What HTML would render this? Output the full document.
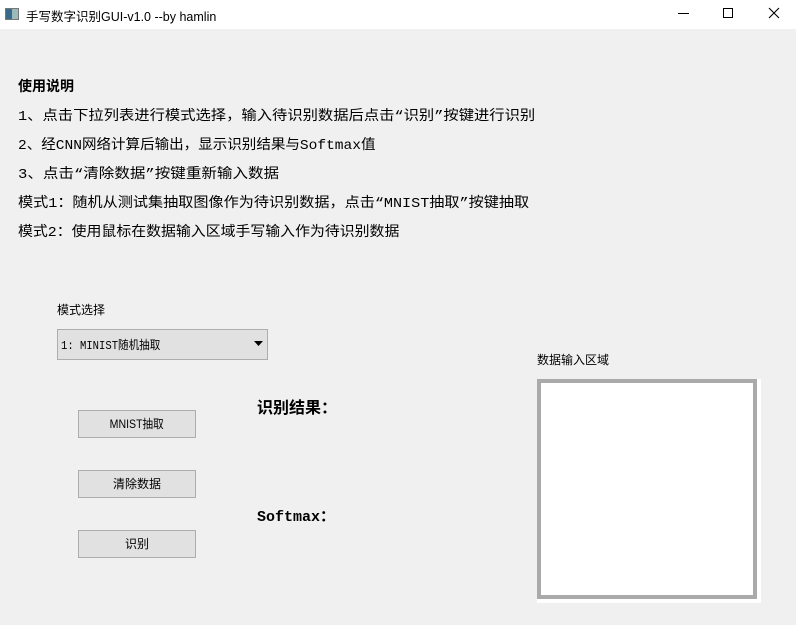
<!DOCTYPE html>
<html><head><meta charset="utf-8"><style>
*{margin:0;padding:0;box-sizing:border-box}
body{width:796px;height:625px;background:#f0f0f0;position:relative;overflow:hidden;font-family:"Liberation Sans","Noto Sans CJK SC",sans-serif;color:#000}
.a{position:absolute;white-space:nowrap}
.tb{position:absolute;left:0;top:0;width:796px;height:29px;background:#fff}
.ln{font-family:"Liberation Mono","Noto Sans CJK SC",monospace;font-size:14px;left:18px;transform-origin:0 0}
.btn{position:absolute;left:78px;width:118px;height:28px;background:#e1e1e1;border:1px solid #adadad;font-size:12px;text-align:center;line-height:26px}
.g{position:absolute;background:#aaa}
</style></head><body>
<div class="tb"></div>
<div class="a" style="left:5px;top:8px;width:14px;height:12px;border:1px solid #777;background:linear-gradient(90deg,#3a6a8a 50%,#9bb 50%)"></div>
<div class="a" style="left:26px;top:6px;font-size:12.5px">手写数字识别GUI-v1.0 --by hamlin</div>
<div class="a" style="left:678px;top:13px;width:11px;height:1px;background:#000"></div>
<div class="a" style="left:723px;top:8px;width:10px;height:10px;border:1px solid #000"></div>
<svg class="a" style="left:768px;top:7px" width="12" height="12"><path d="M1 1L11 11M11 1L1 11" stroke="#000" stroke-width="1.1"/></svg>

<div class="a ln" style="top:76px;font-weight:bold">使用说明</div>
<div class="a ln" style="top:105px;transform:scaleX(1.093)">1、点击下拉列表进行模式选择，输入待识别数据后点击“识别”按键进行识别</div>
<div class="a ln" style="top:134px;transform:scaleX(1.038)">2、经CNN网络计算后输出，显示识别结果与Softmax值</div>
<div class="a ln" style="top:163px;transform:scaleX(1.11)">3、点击“清除数据”按键重新输入数据</div>
<div class="a ln" style="top:192px;transform:scaleX(1.08)">模式1：随机从测试集抽取图像作为待识别数据，点击“MNIST抽取”按键抽取</div>
<div class="a ln" style="top:221px;transform:scaleX(1.064)">模式2：使用鼠标在数据输入区域手写输入作为待识别数据</div>

<div class="a" style="left:57px;top:301px;font-size:12px">模式选择</div>
<div class="a" style="left:57px;top:329px;width:211px;height:31px;background:#e1e1e1;border:1px solid #adadad"></div>
<div class="a" style="left:61px;top:336px;font-size:12px;font-family:'Liberation Mono','Noto Sans CJK SC',monospace;transform:scaleX(0.88);transform-origin:0 0">1: MINIST随机抽取</div>
<svg class="a" style="left:254px;top:341px" width="9" height="6"><path d="M0 0H9L4.5 5Z" fill="#000"/></svg>

<div class="btn" style="top:410px"><span style="display:inline-block;transform:scaleX(0.88)">MNIST抽取</span></div>
<div class="btn" style="top:470px">清除数据</div>
<div class="btn" style="top:530px">识别</div>

<div class="a" style="left:257px;top:394px;font-size:16px;font-weight:bold">识别结果：</div>
<div class="a" style="left:257px;top:505px;font-size:15px;font-weight:bold;font-family:'Liberation Mono','Noto Sans CJK SC',monospace">Softmax：</div>

<div class="a" style="left:537px;top:351px;font-size:12px">数据输入区域</div>
<div class="a" style="left:537px;top:379px;width:224px;height:224px;background:#fff"></div>
<div class="g" style="left:537px;top:379px;width:4px;height:220px"></div>
<div class="g" style="left:537px;top:379px;width:220px;height:4px"></div>
<div class="g" style="left:753px;top:383px;width:4px;height:216px"></div>
<div class="g" style="left:541px;top:595px;width:216px;height:4px"></div>
</body></html>
